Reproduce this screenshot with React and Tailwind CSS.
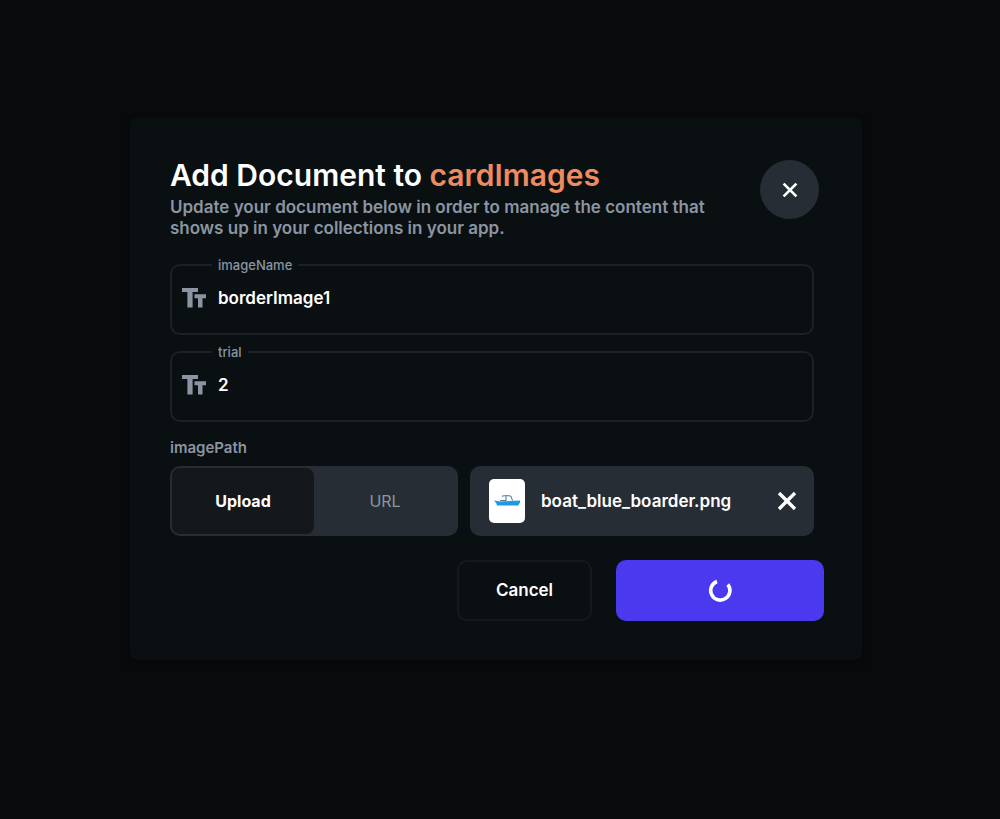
import { useState } from "react";

function TextSizeIcon() {
  return (
    <svg viewBox="0 0 24 20" className="w-6 h-5 shrink-0" fill="#8b95a1" aria-hidden="true">
      <path d="M0 0H16V4H10.600V19.500H5.400V4H0Z" />
      <path d="M12.500 6.300H24V10.200H20.500V19.500H16V10.200H12.500Z" />
    </svg>
  );
}

function CloseIcon({ className }) {
  return (
    <svg viewBox="0 0 20 20" className={className} fill="none" stroke="currentColor" strokeWidth="3.4" aria-hidden="true">
      <path d="M2 2L18 18M18 2L2 18" />
    </svg>
  );
}

function TextField({ id, label, value, onChange }) {
  return (
    <fieldset className="min-w-0 h-[78px] rounded-[10px] border-2 border-[#1c2125]">
      <legend className="ml-[40px] px-[6px] text-[13px] leading-4 font-medium text-[#8b95a1]">
        <label htmlFor={id}>{label}</label>
      </legend>
      <div className="flex items-center gap-3 px-[10px] pt-[13px]">
        <TextSizeIcon />
        <input
          id={id}
          value={value}
          onChange={(e) => onChange(e.target.value)}
          className="min-w-0 flex-1 bg-transparent text-[17px] leading-6 font-semibold text-white outline-none"
        />
      </div>
    </fieldset>
  );
}

function BoatThumb() {
  return (
    <div className="flex items-center justify-center w-9 h-[44px] shrink-0 rounded-[5px] bg-white">
      <svg viewBox="0 0 26 12" className="w-[26px] h-3" fill="none" aria-hidden="true">
        <path d="M0 5.500L6.500 6.500L26 5.500V7.500L24.300 10.500H3L2.300 8.200Z" fill="#1e9be0" />
        <path d="M8 1.200C11 0.400 15 0.600 17 1.200L18.500 5.500M12 1.200V6M6 5.600H12" stroke="#3f7196" strokeWidth="1" />
      </svg>
    </div>
  );
}

export default function App() {
  const [imageName, setImageName] = useState("borderImage1");
  const [trial, setTrial] = useState("2");
  const [source, setSource] = useState("upload");

  const tab = "flex-1 rounded-lg text-base";
  const active = "bg-[#14181b] font-bold text-white";
  const idle = "font-normal text-[#8b95a1]";

  return (
    <div className="min-h-screen bg-[#090a0c] pt-[117px] pb-10 pl-[130px] pr-[138px] font-[Inter,sans-serif]">
      <div role="dialog" aria-labelledby="dialog-title" className="rounded-lg bg-[#0a0f12] pt-[38px] pb-[39px] pl-10 pr-[38px] shadow-[0_2px_6px_rgba(0,0,0,0.4)]">
        <header className="flex items-start justify-between gap-6 pr-[5px]">
          <div>
            <h1 id="dialog-title" className="text-[30px] leading-10 font-semibold text-white">
              Add Document to <span className="text-[#ee8b60]">cardImages</span>
            </h1>
            <p className="mt-[2px] max-w-[566px] text-[17px] leading-[21px] font-semibold text-[#8b95a1]">
              Update your document below in order to manage the content that shows up in your collections in your app.
            </p>
          </div>
          <button type="button" aria-label="Close" className="mt-[5px] flex items-center justify-center size-[59px] shrink-0 rounded-full bg-[#262d34] text-white">
            <CloseIcon className="size-4" />
          </button>
        </header>

        <div className="mt-[18px] pr-[10px]">
          <div className="flex flex-col gap-[9px]">
            <TextField id="imageName" label="imageName" value={imageName} onChange={setImageName} />
            <TextField id="trial" label="trial" value={trial} onChange={setTrial} />
          </div>

          <p id="path-label" className="mt-4 text-[15px] leading-5 font-semibold text-[#8b95a1]">imagePath</p>

          <div className="mt-2 flex gap-3">
            <div role="group" aria-labelledby="path-label" className="flex h-[70px] w-[288px] rounded-[10px] border-2 border-[#262d34] bg-[#262d34]">
              <button type="button" onClick={() => setSource("upload")} className={`${tab} ${source === "upload" ? active : idle}`}>
                Upload
              </button>
              <button type="button" onClick={() => setSource("url")} className={`${tab} ${source === "url" ? active : idle}`}>
                URL
              </button>
            </div>
            <div className="flex h-[70px] min-w-0 flex-1 items-center rounded-[10px] bg-[#262d34] pl-[19px] pr-[17px]">
              <BoatThumb />
              <span className="ml-4 min-w-0 flex-1 truncate text-[17px] leading-6 font-semibold text-white">boat_blue_boarder.png</span>
              <button type="button" aria-label="Remove file" className="text-white">
                <CloseIcon className="size-5" />
              </button>
            </div>
          </div>
        </div>

        <footer className="mt-6 flex justify-end gap-6">
          <button type="button" className="h-[61px] w-[135px] rounded-[10px] border-2 border-[#14191d] text-[17px] font-semibold text-white">
            Cancel
          </button>
          <button type="submit" aria-label="Saving" className="flex h-[61px] w-[208px] items-center justify-center rounded-[10px] bg-[#4b39ef]">
            <svg viewBox="0 0 24 24" className="size-6" fill="none" stroke="white" strokeWidth="3.6" aria-hidden="true">
              <path d="M9 2.500A9.600 9.600 0 1 0 19.800 5.500" />
            </svg>
          </button>
        </footer>
      </div>
    </div>
  );
}
